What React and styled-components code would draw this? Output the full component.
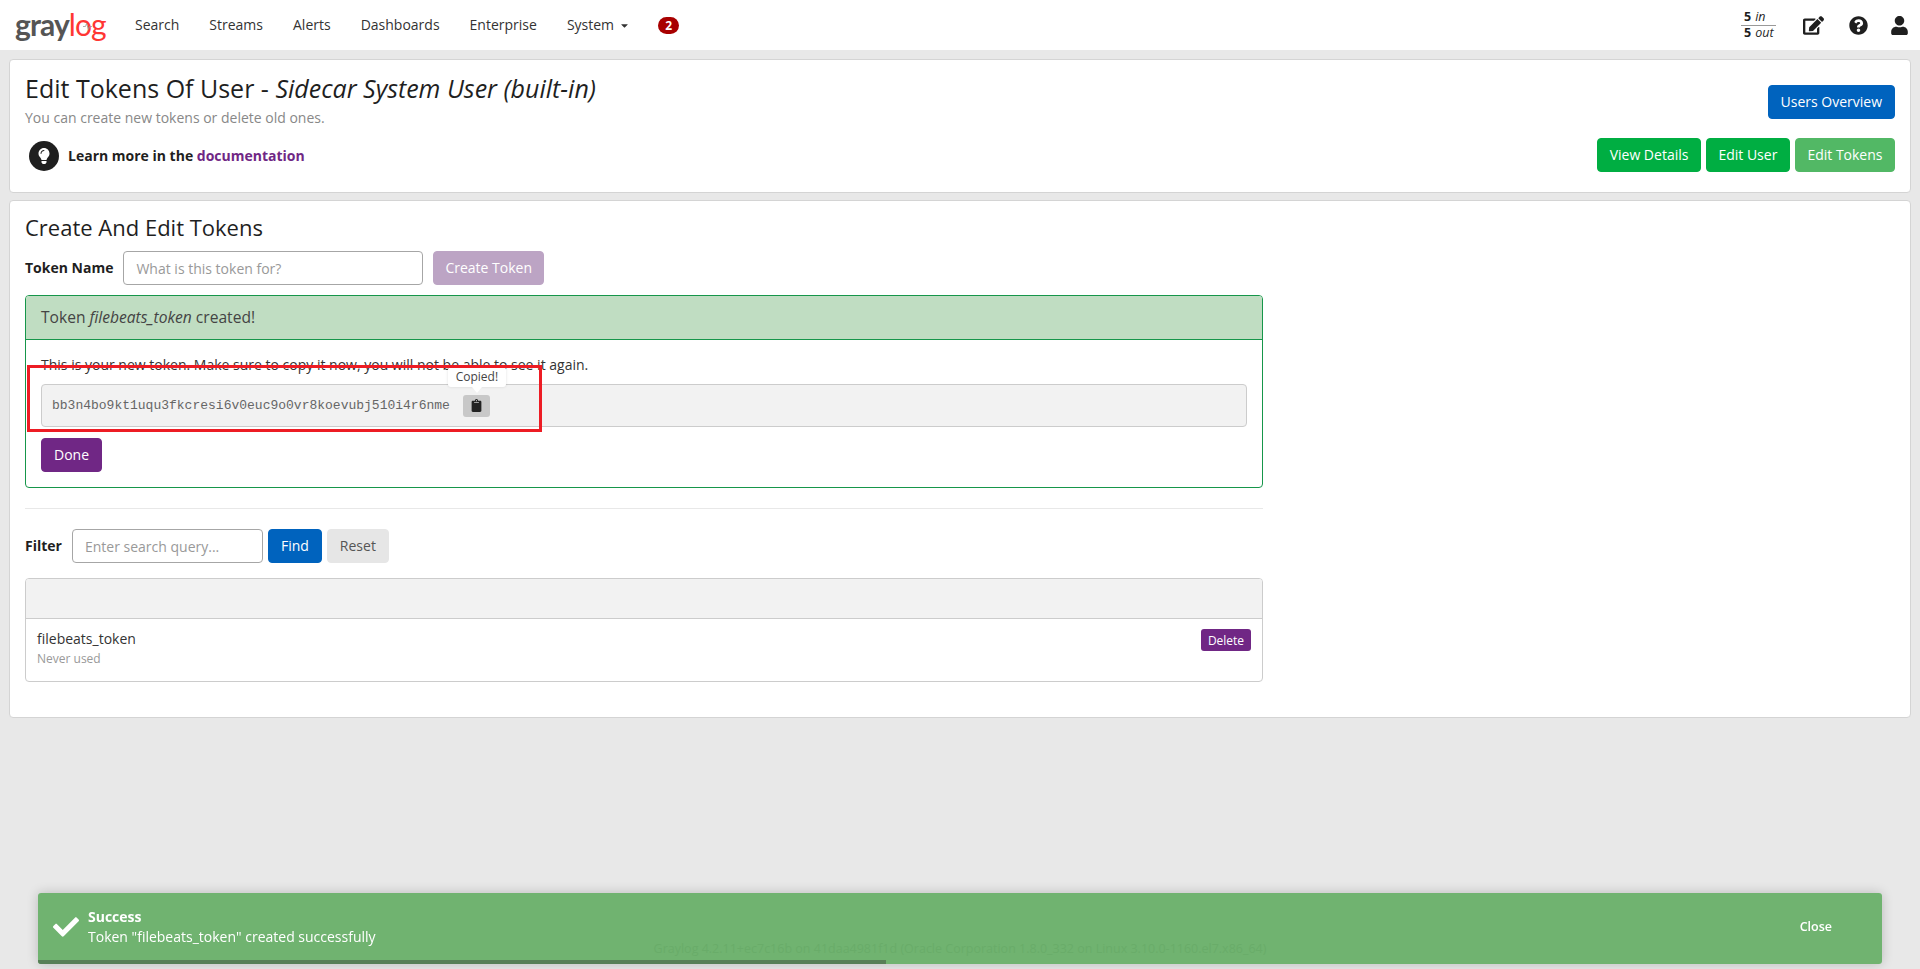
import React from 'react';
import styled, { createGlobalStyle } from 'styled-components';
import {
  FaCaretDown,
  FaCheck,
  FaClipboard,
  FaEdit,
  FaLightbulb,
  FaQuestionCircle,
  FaUser,
} from 'react-icons/fa';

const GlobalStyle = createGlobalStyle`
  html, body {
    margin: 0;
    padding: 0;
    background: #e8e8e8;
    color: #1f1f1f;
    font-family: "Open Sans", "Liberation Sans", sans-serif;
    font-size: 14px;
    line-height: 20px;
  }
  * {
    box-sizing: border-box;
  }
`;

const Page = styled.div`
  height: 969px;
  display: flex;
  flex-direction: column;
  overflow: hidden;
`;

const NavBar = styled.nav`
  height: 50px;
  flex: none;
  background: #fff;
  display: flex;
  align-items: center;
  padding: 0 11px 0 15px;
  margin-bottom: 9px;
`;

const Logo = styled.div`
  position: relative;
  width: 105px;
  display: flex;
  align-items: baseline;
  font-family: Lato, "Open Sans", sans-serif;
  font-size: 30px;
  line-height: 32px;
  letter-spacing: -0.9px;
  margin-top: -3px;
`;

const LogoGray = styled.span`
  color: #555;
  font-weight: 700;
`;

const LogoRed = styled.span`
  color: #ff3633;
  font-weight: 400;
`;

const LogoPulse = styled.svg`
  position: absolute;
  left: 68px;
  top: 14px;
  width: 9px;
  height: 9px;
`;

const NavLinks = styled.div`
  display: flex;
  align-items: center;
  gap: 30px;
  margin-left: 15px;
`;

const NavLink = styled.a`
  color: #333;
  display: flex;
  align-items: center;
  gap: 5px;
`;

const Badge = styled.span`
  width: 21px;
  height: 17px;
  border-radius: 9px;
  background: #a80000;
  color: #fff;
  font-size: 12px;
  line-height: 17px;
  font-weight: 700;
  text-align: center;
  margin-left: -2px;
`;

const NavRight = styled.div`
  margin-left: auto;
  display: flex;
  align-items: center;
  color: #1f1f1f;
`;

const Throughput = styled.div`
  width: 35px;
  margin-right: 27px;
  font-size: 12.5px;
  line-height: 14px;
`;

const ThroughputLine = styled.div`
  white-space: nowrap;
  padding-left: 3px;
  border-bottom: ${(p) => (p.$top ? '1px solid #999' : 'none')};
  padding-bottom: ${(p) => (p.$top ? '1px' : '0')};
  b {
    font-weight: 700;
  }
  i {
    margin-left: 4px;
  }
`;

const NavIcon = styled.span`
  display: flex;
  font-size: ${(p) => p.$size}px;
  margin-left: ${(p) => p.$gap || 0}px;
`;

const Panel = styled.section`
  margin: 0 9px 7px;
  padding: 15px;
  background: #fff;
  border: 1px solid #d4d4d4;
  border-radius: 4px;
  height: ${(p) => p.$height}px;
  flex: none;
`;

const HeaderRow = styled.div`
  display: flex;
  justify-content: space-between;
`;

const HeaderTitle = styled.h1`
  margin: -2px 0 0;
  font-size: 25px;
  line-height: 30px;
  font-weight: 400;
`;

const Lead = styled.p`
  margin: 5px 0 0;
  color: #888;
`;

const DocLine = styled.div`
  display: flex;
  align-items: center;
  margin-top: 13px;
  margin-left: 4px;
  font-weight: 700;
  gap: 9px;
  a {
    color: #702785;
  }
`;

const BulbCircle = styled.span`
  width: 30px;
  height: 30px;
  border-radius: 50%;
  background: #1f1f1f;
  color: #fff;
  display: flex;
  align-items: center;
  justify-content: center;
  font-size: 16px;
`;

const HeaderActions = styled.div`
  display: flex;
  flex-direction: column;
  align-items: flex-end;
  gap: 19px;
  margin-top: 10px;
`;

const ButtonGroup = styled.div`
  display: flex;
  gap: 5px;
`;

const Button = styled.button`
  height: 34px;
  padding: 0 ${(p) => p.$pad || 12}px;
  margin-left: ${(p) => p.$left || 0}px;
  margin-top: ${(p) => p.$top || 0}px;
  border: 1px solid ${(p) => p.$bg};
  border-radius: 4px;
  background: ${(p) => p.$bg};
  color: ${(p) => p.$fg || '#fff'};
  font-family: inherit;
  font-size: 14px;
  line-height: 20px;
  flex: none;
`;

const SectionTitle = styled.h2`
  margin: -2px 0 0;
  font-size: 22px;
  line-height: 26px;
  font-weight: 400;
`;

const FormRow = styled.div`
  display: flex;
  align-items: center;
  margin-top: ${(p) => p.$top}px;
`;

const FieldLabel = styled.label`
  font-weight: 700;
  margin-right: ${(p) => p.$gap}px;
`;

const TextInput = styled.input`
  width: ${(p) => p.$width}px;
  height: 34px;
  padding: 0 12px;
  border: 1px solid #a6a6a6;
  border-radius: 4px;
  font-family: inherit;
  font-size: 14px;
  color: #333;
  &::placeholder {
    color: #999;
    opacity: 1;
  }
`;

const TokenBox = styled.div`
  width: 1238px;
  height: 193px;
  margin-top: 10px;
  border: 1px solid #16964a;
  border-radius: 4px;
`;

const TokenHeader = styled.div`
  height: 44px;
  padding: 0 15px 2px;
  display: flex;
  align-items: center;
  gap: 4px;
  background: #c0ddc2;
  border-bottom: 1px solid #16964a;
  border-radius: 3px 3px 0 0;
  font-size: 15.6px;
  color: #444;
`;

const TokenBody = styled.div`
  position: relative;
  padding: 15px;
`;

const TokenNote = styled.p`
  margin: 0 0 9px;
  line-height: 20px;
  color: #333;
`;

const CodeBlock = styled.div`
  height: 43px;
  padding: 0 10px;
  display: flex;
  align-items: center;
  gap: 13px;
  background: #f2f2f2;
  border: 1px solid #ccc;
  border-radius: 4px;
  font-family: "Liberation Mono", "DejaVu Sans Mono", monospace;
  font-size: 13px;
  color: #666;
`;

const CopyWrap = styled.span`
  position: relative;
  display: flex;
`;

const CopyButton = styled.span`
  width: 27px;
  height: 22px;
  display: flex;
  align-items: center;
  justify-content: center;
  background: #c8c8c8;
  border-radius: 3px;
  color: #222;
  font-size: 13px;
`;

const Tooltip = styled.span`
  position: absolute;
  left: -15px;
  top: -28px;
  width: 58px;
  height: 20px;
  background: #fff;
  border-radius: 3px;
  box-shadow: 0 0 3px rgba(0, 0, 0, 0.12);
  font-family: "Open Sans", sans-serif;
  font-size: 12px;
  line-height: 20px;
  text-align: center;
  color: #444;
  &::after {
    content: '';
    position: absolute;
    left: 24px;
    bottom: -6px;
    border-left: 5px solid transparent;
    border-right: 5px solid transparent;
    border-top: 6px solid #fff;
  }
`;

const RedMark = styled.div`
  position: absolute;
  left: 1px;
  top: 25px;
  width: 515px;
  height: 67px;
  border: 3px solid #ed1c24;
  pointer-events: none;
`;

const Divider = styled.hr`
  width: 1238px;
  margin: 20px 0;
  border: 0;
  border-top: 1px solid #e8e8e8;
`;

const TokenTable = styled.div`
  width: 1238px;
  margin-top: 15px;
  border: 1px solid #ccc;
  border-radius: 4px;
`;

const TableHead = styled.div`
  height: 40px;
  background: #f2f2f2;
  border-bottom: 1px solid #ccc;
  border-radius: 3px 3px 0 0;
`;

const TableRow = styled.div`
  height: 62px;
  padding: 10px 11px 0;
  display: flex;
  justify-content: space-between;
  align-items: flex-start;
`;

const TokenName = styled.div`
  color: #333;
  margin-bottom: 1px;
`;

const TokenMeta = styled.div`
  color: #999;
  font-size: 12px;
  line-height: 17px;
`;

const SmallButton = styled.button`
  height: 22px;
  width: 50px;
  padding: 0;
  border: 0;
  border-radius: 3px;
  background: #702785;
  color: #fff;
  font-family: inherit;
  font-size: 12px;
`;

const Footer = styled.footer`
  margin-top: auto;
  padding-bottom: 10px;
  text-align: center;
  font-size: 12.5px;
  line-height: 20px;
  color: #888;
`;

const Toast = styled.div`
  position: fixed;
  left: 38px;
  top: 893px;
  width: 1844px;
  height: 71px;
  display: flex;
  align-items: center;
  padding: 0 50px 4px 15px;
  background: rgba(102, 174, 102, 0.93);
  border-radius: 3px;
  box-shadow: 0 0 12px rgba(0, 0, 0, 0.2);
  color: #fff;
  overflow: hidden;
`;

const ToastIcon = styled.span`
  display: flex;
  font-size: 26px;
  margin-right: 9px;
`;

const ToastText = styled.div`
  flex: 1;
  font-size: 14px;
  line-height: 20px;
  b {
    display: block;
    font-weight: 700;
  }
`;

const ToastClose = styled.span`
  font-size: 12.5px;
  font-weight: 600;
`;

const ToastProgress = styled.div`
  position: absolute;
  left: 0;
  bottom: 0;
  width: 848px;
  height: 4px;
  background: #577f57;
`;

export default function App() {
  return (
    <Page>
      <GlobalStyle />
      <NavBar>
        <Logo>
          <LogoGray>gray</LogoGray>
          <LogoRed>log</LogoRed>
          <LogoPulse viewBox="0 0 9 9">
            <path d="M0 4.5h2.5l1-3 2 6 1-3H9" fill="none" stroke="#999" strokeWidth="0.8" />
          </LogoPulse>
        </Logo>
        <NavLinks>
          <NavLink>Search</NavLink>
          <NavLink>Streams</NavLink>
          <NavLink>Alerts</NavLink>
          <NavLink>Dashboards</NavLink>
          <NavLink>Enterprise</NavLink>
          <NavLink>
            System <FaCaretDown size={11} />
          </NavLink>
          <Badge>2</Badge>
        </NavLinks>
        <NavRight>
          <Throughput>
            <ThroughputLine $top>
              <b>5</b>
              <i>in</i>
            </ThroughputLine>
            <ThroughputLine>
              <b>5</b>
              <i>out</i>
            </ThroughputLine>
          </Throughput>
          <NavIcon $size={21}>
            <FaEdit />
          </NavIcon>
          <NavIcon $size={19} $gap={25}>
            <FaQuestionCircle />
          </NavIcon>
          <NavIcon $size={19} $gap={22}>
            <FaUser />
          </NavIcon>
        </NavRight>
      </NavBar>

      <Panel $height={134}>
        <HeaderRow>
          <div>
            <HeaderTitle>
              Edit Tokens Of User - <em>Sidecar System User (built-in)</em>
            </HeaderTitle>
            <Lead>You can create new tokens or delete old ones.</Lead>
            <DocLine>
              <BulbCircle>
                <FaLightbulb />
              </BulbCircle>
              <span>
                Learn more in the <a>documentation</a>
              </span>
            </DocLine>
          </div>
          <HeaderActions>
            <Button $bg="#0063be">Users Overview</Button>
            <ButtonGroup>
              <Button $bg="#00ae42" $pad={11.5}>View Details</Button>
              <Button $bg="#00ae42" $pad={11.5}>Edit User</Button>
              <Button $bg="#52b865" $pad={11.5}>Edit Tokens</Button>
            </ButtonGroup>
          </HeaderActions>
        </HeaderRow>
      </Panel>

      <Panel $height={518}>
        <SectionTitle>Create And Edit Tokens</SectionTitle>
        <FormRow $top={11}>
          <FieldLabel $gap={10}>Token Name</FieldLabel>
          <TextInput $width={300} placeholder="What is this token for?" />
          <Button $bg="#bca4c4" $pad={11} $left={10}>
            Create Token
          </Button>
        </FormRow>
        <TokenBox>
          <TokenHeader>
            Token <em>filebeats_token</em> created!
          </TokenHeader>
          <TokenBody>
            <TokenNote>
              This is your new token. Make sure to copy it now, you will not be
              able to see it again.
            </TokenNote>
            <CodeBlock>
              bb3n4bo9kt1uqu3fkcresi6v0euc9o0vr8koevubj510i4r6nme
              <CopyWrap>
                <CopyButton>
                  <FaClipboard />
                </CopyButton>
                <Tooltip>Copied!</Tooltip>
              </CopyWrap>
            </CodeBlock>
            <Button $bg="#702785" $top={11}>
              Done
            </Button>
            <RedMark />
          </TokenBody>
        </TokenBox>
        <Divider />
        <FormRow $top={0}>
          <FieldLabel $gap={10}>Filter</FieldLabel>
          <TextInput $width={191} placeholder="Enter search query..." />
          <Button $bg="#0063be" $left={5}>
            Find
          </Button>
          <Button $bg="#e6e6e6" $fg="#555" $left={5}>
            Reset
          </Button>
        </FormRow>
        <TokenTable>
          <TableHead />
          <TableRow>
            <div>
              <TokenName>filebeats_token</TokenName>
              <TokenMeta>Never used</TokenMeta>
            </div>
            <SmallButton>Delete</SmallButton>
          </TableRow>
        </TokenTable>
      </Panel>

      <Footer>
        Graylog 4.2.11+ec7c16b on 41daa4981f1d (Oracle Corporation 1.8.0_332 on
        Linux 3.10.0-1160.el7.x86_64)
      </Footer>

      <Toast>
        <ToastIcon>
          <FaCheck />
        </ToastIcon>
        <ToastText>
          <b>Success</b>
          Token "filebeats_token" created successfully
        </ToastText>
        <ToastClose>Close</ToastClose>
        <ToastProgress />
      </Toast>
    </Page>
  );
}
